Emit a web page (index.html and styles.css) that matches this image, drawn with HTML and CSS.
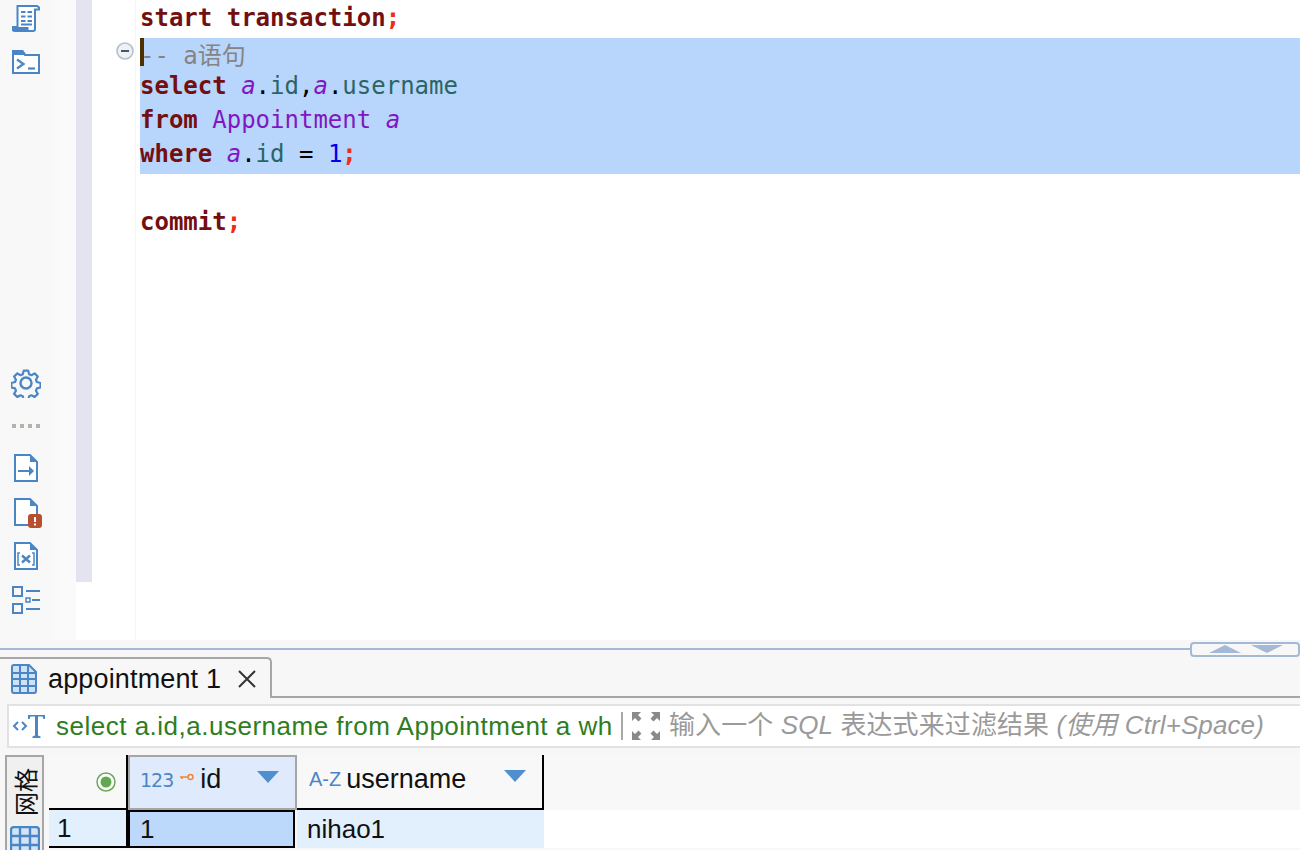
FILE: index.html
```html
<!DOCTYPE html>
<html lang="zh">
<head>
<meta charset="utf-8">
<title>SQL Editor</title>
<link rel="stylesheet" href="styles.css">
</head>
<body>
<div class="app">
  <section class="editor">
    <aside class="toolbar">
      <div class="tool-group top">
        <svg class="ic" width="28" height="28" viewBox="0 0 28 28"><path d="M5.500 2h19.500l2 1.500v2h-4V25a2 2 0 0 1-2 2H3a2.500 2.500 0 0 1-2.500-2.500v-1.500h5z" fill="#fff" stroke="#4a86c5" stroke-width="2"/><path d="M.5 23h16v4H3a2.500 2.500 0 0 1-2.500-2.500z" fill="#4a86c5"/><path d="M9 8h4.500M15.500 8h4.500M9 12.500h4.500M15.500 12.500h4.500M9 17h4.500M15.500 17h4.500M9 20.500h11" stroke="#4a86c5" stroke-width="2" fill="none"/></svg>
        <svg class="ic" width="28" height="24" viewBox="0 0 28 24"><path d="M1 23V1h9l3 4h14v18z" fill="#fff" stroke="#4a86c5" stroke-width="2"/><path d="M0 0h11l3.500 5H0z" fill="#4a86c5"/><path d="M5 9.500l6.500 4.500-6.500 4.500" fill="none" stroke="#4a86c5" stroke-width="2.200"/><path d="M16 18.500h7" stroke="#4a86c5" stroke-width="2.200"/></svg>
      </div>
      <div class="tool-group bottom">
        <svg class="ic" width="30" height="30" viewBox="0 0 30 30"><path d="M12.500 1.500h5l1 4 2.500 1 3.500-2 3.500 3.500-2 3.500 1 2.500 4 1v5l-4 1-1 2.500 2 3.500-3.500 3.500-3.500-2-2.500 1-1 4h-5l-1-4-2.500-1-3.500 2-3.500-3.500 2-3.500-1-2.500-4-1v-5l4-1 1-2.500-2-3.500 3.500-3.500 3.500 2 2.500-1z" fill="none" stroke="#4a86c5" stroke-width="2.400" stroke-linejoin="round" transform="translate(1.300 1.300) scale(.91)"/><circle cx="15" cy="15" r="5.500" fill="none" stroke="#4a86c5" stroke-width="2.400"/></svg>
        <div class="dots"><i></i><i></i><i></i><i></i></div>
        <svg class="ic" width="24" height="28" viewBox="0 0 24 28"><path d="M1 1h15l7 7v19H1z" fill="#fff" stroke="#4a86c5" stroke-width="2"/><path d="M16 1l7 7h-7z" fill="#4a86c5"/><path d="M4 17h14" stroke="#4a86c5" stroke-width="2"/><path d="M15 12l5 5-5 5z" fill="#4a86c5"/></svg>
        <svg class="ic err" width="28" height="30" viewBox="0 0 28 30"><path d="M1 1h15l7 7v19H1z" fill="#fff" stroke="#4a86c5" stroke-width="2"/><path d="M16 1l7 7h-7z" fill="#4a86c5"/><rect x="14" y="16" width="14" height="14" rx="3" fill="#b8502f"/><path d="M21 19v5M21 25.500v2" stroke="#fff" stroke-width="2"/></svg>
        <svg class="ic" width="24" height="28" viewBox="0 0 24 28"><path d="M1 1h15l7 7v19H1z" fill="#fff" stroke="#4a86c5" stroke-width="2"/><path d="M16 1l7 7h-7z" fill="#4a86c5"/><path d="M6 11H4v12h2M18 11h2v12h-2" fill="none" stroke="#4a86c5" stroke-width="1.500"/><path d="M8 13.500l8 7M16 13.500l-8 7" stroke="#4a86c5" stroke-width="2.400"/></svg>
        <svg class="ic" width="28" height="28" viewBox="0 0 28 28"><rect x="1" y="1" width="9" height="9" fill="none" stroke="#4a86c5" stroke-width="2"/><rect x="1" y="18" width="9" height="9" fill="none" stroke="#4a86c5" stroke-width="2"/><rect x="14" y="12" width="4" height="4" fill="none" stroke="#4a86c5" stroke-width="1.500"/><path d="M14 5h14M20 14h8M14 23h14" stroke="#4a86c5" stroke-width="2"/></svg>
      </div>
    </aside>
    <div class="margin-strip"></div>
    <div class="ruler-col"><div class="ruler"></div></div>
    <div class="fold-col">
      <svg class="fold" width="18" height="18" viewBox="0 0 18 18"><circle cx="9" cy="9" r="8" fill="#eef1f5" stroke="#b4c0ce" stroke-width="1.600"/><path d="M5 9h8" stroke="#4a5568" stroke-width="2"/></svg>
    </div>
    <div class="code">
      <div class="line"><span class="kw">start transaction</span><span class="semi">;</span></div>
      <div class="selection">
        <span class="caret"></span>
        <div class="line comment">-- a语句</div>
        <div class="line"><span class="kw">select</span> <span class="alias">a</span>.<span class="col">id</span>,<span class="alias">a</span>.<span class="col">username</span></div>
        <div class="line"><span class="kw">from</span> <span class="table-name">Appointment</span> <span class="alias">a</span></div>
        <div class="line"><span class="kw">where</span> <span class="alias">a</span>.<span class="col">id</span> = <span class="num">1</span><span class="semi">;</span></div>
      </div>
      <div class="line">&nbsp;</div>
      <div class="line"><span class="kw">commit</span><span class="semi">;</span></div>
    </div>
  </section>

  <div class="sash">
    <div class="sash-line"></div>
    <div class="sash-handle">
      <svg width="32" height="8" viewBox="0 0 32 8"><path d="M0 8L16 0l16 8z" fill="#a3b9d6"/></svg>
      <svg width="32" height="8" viewBox="0 0 32 8"><path d="M0 0h32L16 8z" fill="#a3b9d6"/></svg>
    </div>
  </div>

  <section class="results">
    <div class="tabbar">
      <div class="tab">
        <svg width="26" height="30" viewBox="0 0 26 30"><path d="M3 1h15l7 7v19a2 2 0 0 1-2 2H3a2 2 0 0 1-2-2V3a2 2 0 0 1 2-2z" fill="#cfe2f5" stroke="#4a86c5" stroke-width="2"/><path d="M1 9h24M1 15h24M1 22h24M9 1v28M17 1v28" stroke="#4a86c5" stroke-width="2"/></svg>
        <span class="tab-label">appointment 1</span>
        <svg class="tab-close" width="20" height="20" viewBox="0 0 20 20"><path d="M2 2l16 16M18 2L2 18" stroke="#333" stroke-width="2"/></svg>
      </div>
    </div>
    <div class="filter">
      <svg class="t-icon" width="34" height="28" viewBox="0 0 34 28"><path d="M6 10l-4 4 4 4M10 10l4 4-4 4" fill="none" stroke="#4a86c5" stroke-width="2"/><path d="M16 3h17v4h-1.500l-1-2.500h-4.500v19l2.500 1v1.500h-8v-1.500l2.500-1v-19h-4.500l-1 2.500H16z" fill="#4a86c5"/></svg>
      <span class="query">select a.id,a.username from Appointment a wh</span>
      <span class="sep"></span>
      <svg class="expand" width="30" height="30" viewBox="0 0 30 30"><path d="M1 1h9l-3 3 3.500 3.500-3 3L4 7l-3 3zM29 1v9l-3-3-3.500 3.500-3-3L23 4l-3-3zM1 29v-9l3 3 3.500-3.500 3 3L7 26l3 3zM29 29h-9l3-3-3.500-3.500 3-3L26 23l3-3z" fill="#8a8a8a"/></svg>
      <span class="placeholder">输入一个 <em>SQL</em> 表达式来过滤结果 <em>(使用 Ctrl+Space)</em></span>
    </div>
    <div class="data">
      <div class="side-tab">
        <span class="side-label">网格</span>
        <svg width="30" height="30" viewBox="0 0 30 30"><rect x="1" y="1" width="28" height="32" rx="3" fill="#d4e4f6" stroke="#4a86c5" stroke-width="2.400"/><path d="M1 10h28M1 19h28M10 1v32M20 1v32" stroke="#4a86c5" stroke-width="2.400"/></svg>
      </div>
      <div class="grid">
        <div class="head corner"><svg width="20" height="20" viewBox="0 0 20 20"><circle cx="10" cy="10" r="9" fill="#fff" stroke="#6aa85a" stroke-width="1.500"/><circle cx="10" cy="10" r="5.500" fill="#62a84f"/></svg></div>
        <div class="head id-head">
          <span class="type num-type">123</span>
          <svg class="key" width="14" height="8" viewBox="0 0 14 8"><path d="M0 4h8M2 4v2" stroke="#e98a3b" stroke-width="1.500"/><circle cx="10.500" cy="4" r="2.500" fill="none" stroke="#e98a3b" stroke-width="1.500"/></svg>
          <span class="col-name">id</span>
          <svg class="sort" width="22" height="12" viewBox="0 0 22 12"><path d="M0 0h22L11 12z" fill="#4f8fcf"/></svg>
        </div>
        <div class="head name-head">
          <span class="type">A-Z</span>
          <span class="col-name">username</span>
          <svg class="sort" width="22" height="12" viewBox="0 0 22 12"><path d="M0 0h22L11 12z" fill="#4f8fcf"/></svg>
        </div>
        <div class="head filler"></div>
        <div class="cell rownum">1</div>
        <div class="cell selected">1</div>
        <div class="cell value">nihao1</div>
        <div class="cell empty"></div>
      </div>
    </div>
  </section>
</div>
</body>
</html>
```
FILE: styles.css
```css
* { box-sizing: border-box; }
html, body { margin: 0; padding: 0; height: 100%; overflow: hidden; background: #f7f7f7; }
.app { width: 1300px; height: 850px; display: flex; flex-direction: column; overflow: hidden; font-family: "Liberation Sans", "Noto Sans CJK SC", sans-serif; }

.editor { height: 640px; display: flex; background: #fff; flex: none; }
.toolbar { width: 52px; background: #f8f8f8; display: flex; flex-direction: column; align-items: center; justify-content: space-between; padding: 4px 0 26px; }
.tool-group { display: flex; flex-direction: column; align-items: center; }
.top { gap: 18px; }
.bottom { gap: 16px; }
.ic { display: block; flex: none; }
.err { margin: 0 -4px -2px 0; }
.dots { display: flex; gap: 4px; height: 4px; margin: 10px 0; }
.dots i { width: 4px; height: 4px; background: #b5b2ac; }
.margin-strip { width: 24px; background: #fafafa; }
.ruler-col { width: 16px; }
.ruler { height: 582px; background: #e4e4f0; }
.fold-col { width: 44px; border-right: 1px solid #f6f6f6; display: flex; flex-direction: column; align-items: flex-end; padding: 42px 1px 0 0; }
.code { flex: 1; padding: 4px 0 0 4px; font-family: "DejaVu Sans Mono", "Noto Sans CJK SC", monospace; font-size: 24px; color: #000; }
.line { height: 34px; line-height: 28px; white-space: pre; }
.selection { background: #b8d5fc; position: relative; }
.caret { position: absolute; left: 0; top: 0; width: 4px; height: 28px; background: #4d2f00; }
.kw { font-weight: 700; color: #730f0f; }
.semi { font-weight: 700; color: #ee2d14; }
.alias { font-style: italic; color: #8117c2; }
.col { color: #2a6565; }
.table-name { color: #8117c2; }
.num { color: #0000f0; }
.comment { color: #848484; padding-top: 4px; }

.sash { height: 16px; flex: none; display: flex; align-items: center; margin-top: 1px; }
.sash-line { flex: 1; height: 2px; background: #a3b9d6; }
.sash-handle { width: 110px; height: 15px; border: 2px solid #a3b9d6; border-radius: 4px; display: flex; justify-content: center; gap: 10px; padding: 0 0 0 2px; align-items: flex-start; }
.sash-handle svg { display: block; margin-top: 1px; }

.results { flex: 1; display: flex; flex-direction: column; min-height: 0; }
.tabbar { height: 41px; flex: none; border-bottom: 2px solid #a6a6a6; display: flex; }
.tab { width: 272px; height: 41px; border-top: 2px solid #a6a6a6; border-right: 2px solid #a6a6a6; border-top-right-radius: 5px; background: #f7f7f7; display: flex; align-items: center; padding: 0 13px 0 11px; }
.tab svg { flex: none; }
.tab-label { font-size: 27px; letter-spacing: .15px; color: #111; margin: 2px 0 0 11px; white-space: nowrap; }
.tab-close { margin-left: auto; }

.filter { height: 44px; margin: 6px 0 0 7px; flex: none; background: #fff; border: 2px solid #e2e2e2; border-right: 0; display: flex; align-items: center; }
.t-icon { flex: none; margin: 0 10px 0 3px; }
.query { width: 558px; flex: none; overflow: hidden; white-space: nowrap; font-size: 26px; letter-spacing: .5px; color: #2e7d1e; }
.sep { width: 2px; height: 28px; background: #a8a8a8; margin: 0 8px 0 7px; flex: none; }
.expand { flex: none; }
.placeholder { margin: -8px 0 0 8px; font-size: 26px; letter-spacing: .1px; color: #9a9a9a; white-space: nowrap; }
.placeholder em { font-style: italic; }

.data { display: flex; flex: 1; min-height: 0; padding: 7px 0 0 5px; }
.side-tab { width: 39px; flex: none; border: 2px solid #a6a6a6; border-bottom: 0; display: flex; flex-direction: column; align-items: center; overflow: hidden; background: #f0f0f0; }
.side-label { flex: none; writing-mode: vertical-rl; text-orientation: sideways; transform: rotate(180deg); font-size: 24px; line-height: 24px; color: #111; margin: 11px 0 10px; font-family: "Noto Sans CJK SC", sans-serif; }
.side-tab svg { flex: none; }
.grid { margin-left: 5px; flex: 1; display: grid; grid-template-columns: 79px 169px 247px 1fr; grid-template-rows: 55px 38px; align-content: start; }
.head { display: flex; align-items: center; font-size: 27px; color: #111; border-bottom: 2px solid #000; background: #f8f8f8; border-right: 2px solid #000; }
.corner { justify-content: flex-end; padding-right: 10px; }
.id-head { background: #dfebfc; border: 2px solid #a6a6a6; padding: 0 16px 6px 10px; }
.name-head { padding: 0 16px 5px 12px; }
.filler { border: 0; background: #f8f8f8; }
.type { font-size: 20px; color: #4a86c5; }
.num-type { font-family: "DejaVu Sans", sans-serif; font-size: 19px; letter-spacing: -1px; }
.key { margin: 0 5px 6px 7px; flex: none; }
.col-name { margin-left: 5px; }
.key + .col-name { margin-left: 1px; }
.sort { margin-left: auto; margin-bottom: 6px; flex: none; }
.cell { font-size: 26px; color: #111; display: flex; align-items: center; padding-left: 8px; }
.rownum { background: #e2effd; border-right: 2px solid #000; border-bottom: 2px solid #000; }
.selected { background: #bcd8fa; border: 2px solid #000; padding-left: 10px; margin-right: 2px; }
.value { background: #e2effd; padding-left: 10px; }
.empty { background: #fff; }
```
